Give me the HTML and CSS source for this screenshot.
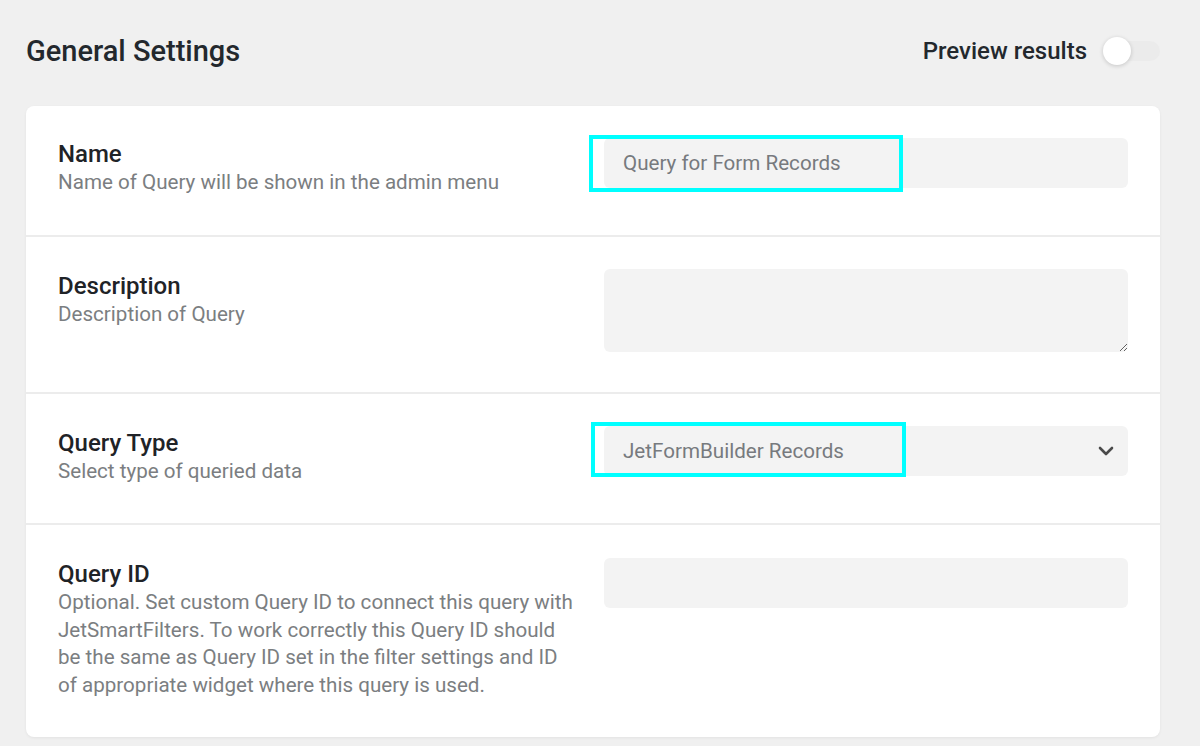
FILE: index.html
```html
<!DOCTYPE html>
<html lang="en">
<head>
<meta charset="utf-8">
<title>General Settings</title>
<link rel="stylesheet" href="styles.css">
</head>
<body>
<div class="page">
  <header class="head">
    <h1 class="title">General Settings</h1>
    <div class="preview">
      <span class="preview-label">Preview results</span>
      <span class="toggle"><span class="knob"></span></span>
    </div>
  </header>

  <section class="card">
    <div class="row row-name">
      <div class="info">
        <div class="label">Name</div>
        <div class="desc">Name of Query will be shown in the admin menu</div>
      </div>
      <div class="control">
        <div class="field">
          <div class="input">Query for Form Records</div>
          <span class="hl hl-name"></span>
        </div>
      </div>
    </div>

    <div class="row row-desc">
      <div class="info">
        <div class="label">Description</div>
        <div class="desc">Description of Query</div>
      </div>
      <div class="control">
        <textarea class="textarea"></textarea>
      </div>
    </div>

    <div class="row row-type">
      <div class="info">
        <div class="label">Query Type</div>
        <div class="desc">Select type of queried data</div>
      </div>
      <div class="control">
        <div class="field">
          <div class="input select">
            <span>JetFormBuilder Records</span>
            <svg class="chev" width="16" height="10" viewBox="0 0 16 10"><path d="M2 2l6 6 6-6" fill="none" stroke="#4a4a4a" stroke-width="2.6" stroke-linecap="round" stroke-linejoin="round"/></svg>
          </div>
          <span class="hl hl-type"></span>
        </div>
      </div>
    </div>

    <div class="row row-id">
      <div class="info">
        <div class="label">Query ID</div>
        <div class="desc">Optional. Set custom Query ID to connect this query with JetSmartFilters. To work correctly this Query ID should be the same as Query ID set in the filter settings and ID of appropriate widget where this query is used.</div>
      </div>
      <div class="control">
        <div class="input"></div>
      </div>
    </div>
  </section>
</div>
</body>
</html>
```

FILE: styles.css
```css
* { box-sizing: border-box; }
html, body { margin: 0; padding: 0; }
body {
  background: #f0f0f0;
  font-family: Roboto, "Liberation Sans", sans-serif;
  color: #23282d;
  width: 1200px;
  height: 746px;
  overflow: hidden;
}
.page { padding: 0 40px 0 26px; }
.head {
  display: flex;
  align-items: center;
  justify-content: space-between;
  height: 106px;
  padding-bottom: 4px;
}
.title {
  margin: 0;
  font-size: 29px;
  font-weight: 500;
  color: #23282d;
}
.preview { display: flex; align-items: center; gap: 17px; }
.preview-label { font-size: 24px; font-weight: 500; color: #23282d; }
.toggle {
  position: relative;
  width: 56px;
  height: 20px;
  border-radius: 10px;
  background: #ebebeb;
}
.knob {
  position: absolute;
  left: -1px;
  top: -4px;
  width: 28px;
  height: 28px;
  border-radius: 50%;
  background: #fff;
  box-shadow: 0 1px 4px rgba(0,0,0,0.18);
}
.card {
  background: #fff;
  border-radius: 8px;
  box-shadow: 0 1px 3px rgba(0,0,0,0.06);
}
.row {
  display: grid;
  grid-template-columns: 523px 1fr;
  column-gap: 23px;
  padding: 32px 32px 0;
  border-top: 2px solid #ececec;
}
.row:first-child { border-top: 0; }
.row-name { height: 129px; }
.row-desc { height: 157px; padding-top: 32px; }
.row-type { height: 131px; padding-top: 32px; }
.row-id { height: 214px; padding-top: 33px; }
.row-desc .info, .row-type .info { padding-top: 2px; }
.info { padding-top: 1px; }
.label {
  font-size: 24px;
  font-weight: 500;
  line-height: 30px;
  color: #1f2327;
}
.desc {
  font-size: 20.6px;
  line-height: 27.5px;
  color: #7b7e81;
}
.control { min-width: 0; }
.field { position: relative; }
.input {
  height: 50px;
  border-radius: 6px;
  background: #f3f3f3;
  padding: 0 19px;
  display: flex;
  align-items: center;
  font-size: 20.6px;
  color: #777a7e;
}
.select { justify-content: space-between; padding-right: 14px; }
.chev { display: block; }
.textarea {
  display: block;
  width: 100%;
  height: 83px;
  border: 0;
  border-radius: 6px;
  background: #f3f3f3;
  resize: vertical;
  font-family: inherit;
  margin: 0;
}
.hl {
  position: absolute;
  border: 4px solid #00ffff;
  pointer-events: none;
}
.hl-name { left: -15px; top: -3px; width: 314px; height: 57px; }
.hl-type { left: -13px; top: -4px; width: 315px; height: 55px; }
```
